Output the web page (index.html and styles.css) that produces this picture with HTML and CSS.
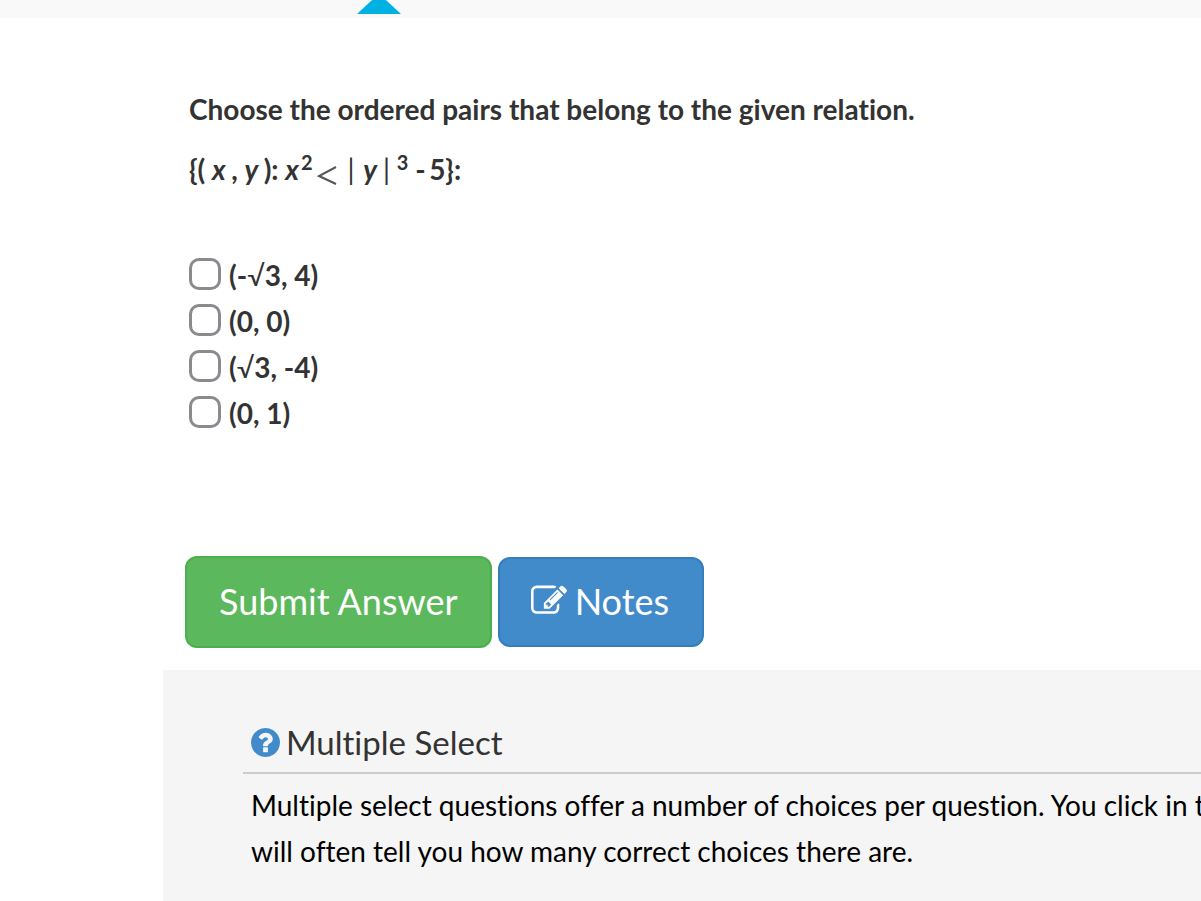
FILE: index.html
```html
<!DOCTYPE html>
<html lang="en">
<head>
<meta charset="utf-8">
<title>Multiple Select Question</title>
<link rel="stylesheet" href="styles.css">
</head>
<body>
<header class="topbar">
  <svg class="pointer" viewBox="0 0 44 14" aria-hidden="true"><path d="M0 14L14 1Q15 0 16 0H28Q29 0 30 1L44 14z"/></svg>
</header>
<main class="page">
  <form class="question">
    <p class="prompt">Choose the ordered pairs that belong to the given relation.</p>
    <p class="relation">{( <i>x</i><span class="tight"> </span>, <i>y</i><span class="tight"> </span>): <i>x</i><sup>2</sup><svg class="less" viewBox="0 0 20 20" role="img" aria-label="less than"><path d="M19 1L2 10L19 18"/></svg> <span class="bar">|</span> <i>y</i><span class="bar">|</span> <sup>3</sup> -<span class="tight"> </span>5}:</p>
    <div class="choices">
      <label class="choice"><input type="checkbox" class="box"><span>(-<span class="root">√</span>3, 4)</span></label>
      <label class="choice"><input type="checkbox" class="box"><span>(0, 0)</span></label>
      <label class="choice"><input type="checkbox" class="box"><span>(<span class="root">√</span>3, -4)</span></label>
      <label class="choice"><input type="checkbox" class="box"><span>(0, 1)</span></label>
    </div>
    <div class="actions">
      <button type="button" class="btn btn-submit">Submit Answer</button>
      <button type="button" class="btn btn-notes"><svg class="edit" viewBox="0 0 1792 1792" aria-hidden="true"><path d="M888 1184l116-116-152-152-116 116v56h96v96h56zm440-720q-16-16-33 1l-350 350q-17 17-1 33t33-1l350-350q17-17 1-33zm80 594v190q0 119-84.500 203.500t-203.500 84.500h-832q-119 0-203.500-84.500t-84.500-203.500v-832q0-119 84.500-203.500t203.500-84.500h832q63 0 117 25 15 7 18 23 3 17-9 29l-49 49q-14 14-32 8-23-6-45-6h-832q-66 0-113 47t-47 113v832q0 66 47 113t113 47h832q66 0 113-47t47-113v-126q0-13 9-22l64-64q15-15 35-7t20 29zm-96-738l288 288-672 672h-288v-288zm444 132l-92 92-288-288 92-92q28-28 68-28t68 28l152 152q28 28 28 68t-28 68z"/></svg>Notes</button>
    </div>
  </form>
  <section class="help">
    <h2 class="help-title"><svg class="mark" viewBox="128 128 1536 1536" aria-hidden="true"><path d="M1024 1376v-192q0-14-9-23t-23-9h-192q-14 0-23 9t-9 23v192q0 14 9 23t23 9h192q14 0 23-9t9-23zm256-672q0-88-55.500-163t-138.500-116-170-41q-243 0-371 213-15 24 8 42l132 100q7 6 19 6 16 0 25-12 53-68 86-92 34-24 86-24 48 0 85.500 26t37.500 59q0 38-20 61t-68 45q-63 28-115.500 86.500t-52.500 125.500v36q0 14 9 23t23 9h192q14 0 23-9t9-23q0-19 21.500-49.500t54.500-49.500q32-18 49-28.500t46-35 44.500-48 28-60.500 12.500-81zm384 192q0 209-103 385.500t-279.500 279.500-385.500 103-385.500-103-279.500-279.500-103-385.500 103-385.500 279.500-279.500 385.500-103 385.500 103 279.500 279.500 103 385.500z"/></svg>Multiple Select</h2>
    <p class="help-text">Multiple select questions offer a number of choices per question. You click in th<br>will often tell you how many correct choices there are.</p>
  </section>
</main>
</body>
</html>
```
FILE: styles.css
```css
* { box-sizing: border-box; }
html, body { min-height: 100%; }
body {
  margin: 0;
  background: #fff;
  color: #333;
  font-family: Lato, "Liberation Sans", sans-serif;
  font-size: 28px;
  font-variant-ligatures: none;
  line-height: 46px;
  overflow: hidden;
}
.topbar {
  height: 18px;
  padding-left: 357px;
  background: #f9f9f9;
}
.pointer {
  display: block;
  width: 44px;
  height: 14px;
  fill: #00b1e1;
}
.page {
  display: flex;
  flex-direction: column;
  min-height: calc(100vh - 18px);
  padding-left: 163px;
}
.question {
  padding: 68px 22px 22px 26px;
  font-weight: 700;
}
.prompt { margin: 0 0 14px; }
.relation { margin: 0; }
.relation i { margin-right: 2px; }
.relation sup {
  font-size: 20px;
  line-height: 0;
}
.tight {
  font-size: 14px;
  line-height: 0;
}
.bar {
  margin: 0 2px;
  font-weight: 400;
}
.relation i + .bar { margin: 0 0 0 4px; }
.less {
  width: 20px;
  height: 20px;
  margin: 0 2px 0 4px;
  vertical-align: -6px;
  fill: none;
  stroke: #555;
  stroke-width: 2;
}
.choices {
  display: flex;
  flex-direction: column;
  align-items: flex-start;
  margin-top: 60px;
}
.choice {
  display: flex;
  align-items: center;
  gap: 8px;
}
.root { font-weight: 400; }
.box {
  appearance: none;
  width: 32px;
  height: 32px;
  margin: 0 0 2px;
  border: 3px solid #8a8a8f;
  border-radius: 10px;
  background: #fff;
}
.actions {
  display: flex;
  align-items: center;
  gap: 6px;
  margin: 120px 0 0 -4px;
}
.btn {
  display: flex;
  align-items: center;
  gap: 8px;
  border: 2px solid;
  border-radius: 12px;
  color: #fff;
  font-family: inherit;
  font-size: 36px;
  line-height: 46px;
}
.btn-submit {
  padding: 20px 32px 22px;
  background: #5cb85c;
  border-color: #4cae4c;
}
.btn-notes {
  padding: 19px 33px 21px 31px;
  background: #428bca;
  border-color: #357ebd;
}
.edit {
  width: 36px;
  height: 36px;
  fill: #fff;
}
.help {
  flex: 1;
  padding: 48px 0 24px 80px;
  background: #f5f5f5;
  overflow: hidden;
}
.help-title {
  display: flex;
  align-items: center;
  gap: 6px;
  margin: 0;
  padding: 0 8px 6px;
  border-bottom: 2px solid #ccc;
  font-size: 33px;
  font-weight: 400;
  line-height: 48px;
}
.mark {
  width: 29px;
  height: 29px;
  fill: #428bca;
}
.help-text {
  margin: 0;
  padding: 8px 0 0 8px;
  color: #000;
  white-space: nowrap;
}
```
